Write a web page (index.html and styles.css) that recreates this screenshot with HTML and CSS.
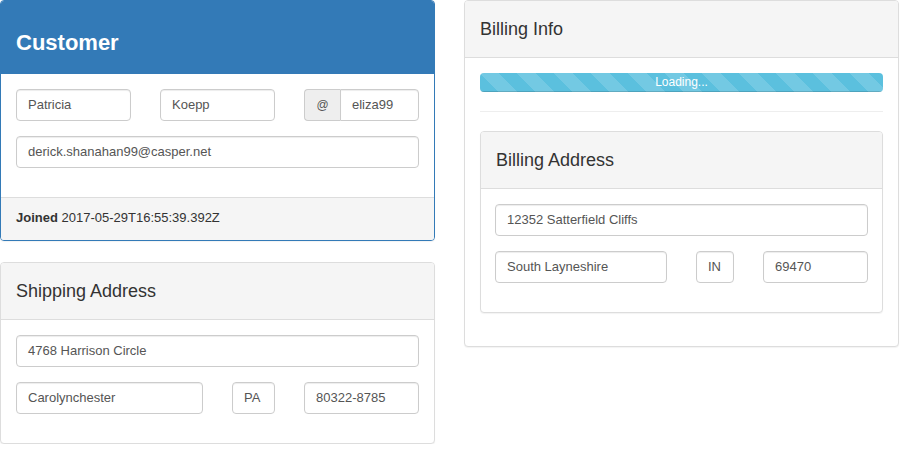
FILE: index.html
```html
<!DOCTYPE html>
<html lang="en">
<head>
<meta charset="utf-8">
<title>Customer</title>
<link rel="stylesheet" href="styles.css">
</head>
<body>
<div class="page">
  <div class="col">
    <section class="panel panel-primary">
      <div class="panel-heading heading-lg"><h1 class="title-lg">Customer</h1></div>
      <div class="panel-body">
        <div class="row row-name">
          <div class="form-control">Patricia</div>
          <div class="form-control">Koepp</div>
          <div class="input-group">
            <span class="addon">@</span>
            <span class="form-control group-control">eliza99</span>
          </div>
        </div>
        <div class="row">
          <div class="form-control">derick.shanahan99@casper.net</div>
        </div>
      </div>
      <div class="panel-footer"><strong>Joined</strong> 2017-05-29T16:55:39.392Z</div>
    </section>

    <section class="panel">
      <div class="panel-heading"><h2 class="title">Shipping Address</h2></div>
      <div class="panel-body">
        <div class="row">
          <div class="form-control">4768 Harrison Circle</div>
        </div>
        <div class="row row-addr">
          <div class="form-control">Carolynchester</div>
          <div class="form-control">PA</div>
          <div class="form-control">80322-8785</div>
        </div>
      </div>
    </section>
  </div>

  <div class="col">
    <section class="panel">
      <div class="panel-heading"><h2 class="title">Billing Info</h2></div>
      <div class="panel-body outer-body">
        <div class="progress"><div class="progress-bar">Loading...</div></div>
        <hr class="divider">
        <section class="panel inner-panel">
          <div class="panel-heading inner-heading"><h2 class="title">Billing Address</h2></div>
          <div class="panel-body inner-body">
            <div class="row">
              <div class="form-control">12352 Satterfield Cliffs</div>
            </div>
            <div class="row row-addr-inner">
              <div class="form-control">South Layneshire</div>
              <div class="form-control">IN</div>
              <div class="form-control">69470</div>
            </div>
          </div>
        </section>
      </div>
    </section>
  </div>
</div>
</body>
</html>
```

FILE: styles.css
```css
* { box-sizing: border-box; }

html, body {
  margin: 0;
  padding: 0;
  background: #fff;
}

body {
  font-family: "Liberation Sans", Arial, Helvetica, sans-serif;
  font-size: 13px;
  color: #333;
}

.page {
  display: grid;
  grid-template-columns: 435px 435px;
  column-gap: 29px;
  align-items: start;
}

.col {
  display: flex;
  flex-direction: column;
  gap: 21px;
}

.panel {
  background: #fff;
  border: 1px solid #ddd;
  border-radius: 4px;
  box-shadow: 0 1px 1px rgba(0, 0, 0, 0.05);
  overflow: hidden;
}

.panel-primary {
  border-color: #337ab7;
}

.panel-heading {
  background: #f5f5f5;
  border-bottom: 1px solid #ddd;
  padding: 18px 15px 18px;
}

.heading-lg {
  background: #337ab7;
  border-bottom-color: #337ab7;
  padding: 30px 15px 18px;
}

.title-lg {
  margin: 0;
  font-size: 22px;
  line-height: 24px;
  font-weight: bold;
  color: #fff;
}

.title {
  margin: 0;
  font-size: 18px;
  line-height: 20px;
  font-weight: normal;
  color: #333;
}

.panel-body {
  padding: 15px 15px 29px;
  display: flex;
  flex-direction: column;
  gap: 15px;
}

.panel-footer {
  background: #f5f5f5;
  border-top: 1px solid #ddd;
  padding: 10px 15px 12px;
  line-height: 20px;
  font-size: 13px;
  color: #333;
}

.row {
  display: grid;
  grid-template-columns: 1fr;
  column-gap: 29px;
}

.row-name {
  grid-template-columns: 1fr 1fr 1fr;
}

.row-addr {
  grid-template-columns: 187px 43px 1fr;
}

.row-addr-inner {
  grid-template-columns: 172px 38px 1fr;
}

.form-control {
  display: block;
  height: 32px;
  padding: 0 11px;
  border: 1px solid #ccc;
  border-radius: 4px;
  background: #fff;
  color: #555;
  font-size: 13px;
  line-height: 30px;
  box-shadow: inset 0 1px 1px rgba(0, 0, 0, 0.075);
  white-space: nowrap;
  overflow: hidden;
}

.input-group {
  display: flex;
  height: 32px;
}

.addon {
  flex: 0 0 36px;
  height: 32px;
  border: 1px solid #ccc;
  border-right: 0;
  border-radius: 4px 0 0 4px;
  background: #eee;
  color: #555;
  font-size: 12px;
  line-height: 30px;
  text-align: center;
}

.group-control {
  flex: 1 1 auto;
  border-radius: 0 4px 4px 0;
}

.outer-body {
  padding: 15px 15px 15px;
  gap: 0;
}

.progress {
  height: 19px;
  border-radius: 4px;
  background: #f5f5f5;
  overflow: hidden;
  margin-bottom: 19px;
}

.progress-bar {
  height: 19px;
  width: 100%;
  background-color: #5bc0de;
  background-image: linear-gradient(45deg,
    rgba(255, 255, 255, 0.15) 25%, transparent 25%,
    transparent 50%, rgba(255, 255, 255, 0.15) 50%,
    rgba(255, 255, 255, 0.15) 75%, transparent 75%, transparent);
  background-size: 37px 37px;
  box-shadow: inset 0 -1px 0 rgba(0, 0, 0, 0.15);
  color: #fff;
  font-size: 12px;
  line-height: 19px;
  text-align: center;
}

.divider {
  margin: 0 0 19px;
  border: 0;
  border-top: 1px solid #eee;
  height: 0;
}

.inner-panel {
  margin-bottom: 18px;
}

.inner-heading {
  padding-left: 15px;
}

.inner-body {
  padding: 15px 14px 29px;
}
```
